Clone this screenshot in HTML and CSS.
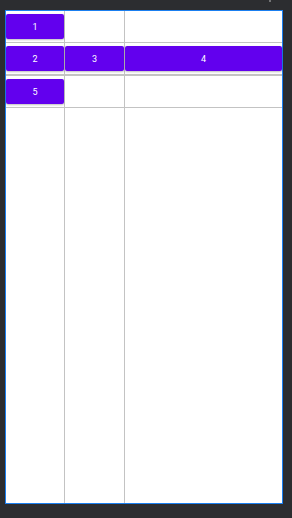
FILE: index.html
```html
<!DOCTYPE html>
<html>
<head>
<meta charset="utf-8">
<link rel="stylesheet" href="styles.css">
</head>
<body>
<div class="topbar"><span class="dot"></span></div>
<div class="panel">
  <div class="grid">
    <div class="cell"><button class="btn">1</button></div>
    <div class="cell"></div>
    <div class="cell"></div>
    <div class="cell"><button class="btn">2</button></div>
    <div class="cell"><button class="btn">3</button></div>
    <div class="cell"><button class="btn">4</button></div>
    <div class="cell r3"><button class="btn">5</button></div>
    <div class="cell r3"></div>
    <div class="cell r3"></div>
    <div class="cell"></div>
    <div class="cell"></div>
    <div class="cell"></div>
  </div>
</div>
</body>
</html>
```
FILE: styles.css
```css
html, body {
  margin: 0;
  padding: 0;
  background: #2c2d30;
  width: 292px;
  height: 518px;
  overflow: hidden;
  font-family: Roboto, "Liberation Sans", sans-serif;
}
.topbar {
  height: 10px;
  display: flex;
  justify-content: flex-end;
  padding-right: 21px;
}
.dot {
  width: 2px;
  height: 2px;
  border-radius: 1px;
  background: #8a8b8d;
  margin-top: 0;
}
.panel {
  margin-left: 5px;
  width: 276px;
  height: 492px;
  border: 1px solid #1a7ff0;
  background: #fff;
}
.grid {
  display: grid;
  grid-template-columns: 58px 59px 1fr;
  grid-template-rows: 31px 31px 32px 1fr;
  column-gap: 1px;
  row-gap: 1px;
  background: #c3c3c3;
  height: 100%;
}
.cell {
  background: #fff;
  display: flex;
  align-items: center;
}
.r3 {
  border-top: 1px solid #c3c3c3;
}
.btn {
  width: 100%;
  height: 25px;
  margin: 0;
  border: none;
  border-radius: 2px;
  background: #6200ee;
  color: #fff;
  font-family: Roboto, "Liberation Sans", sans-serif;
  font-size: 9px;
  font-weight: 400;
  padding: 0;
  box-shadow: 0 1px 2px rgba(0,0,0,0.25);
}
```
